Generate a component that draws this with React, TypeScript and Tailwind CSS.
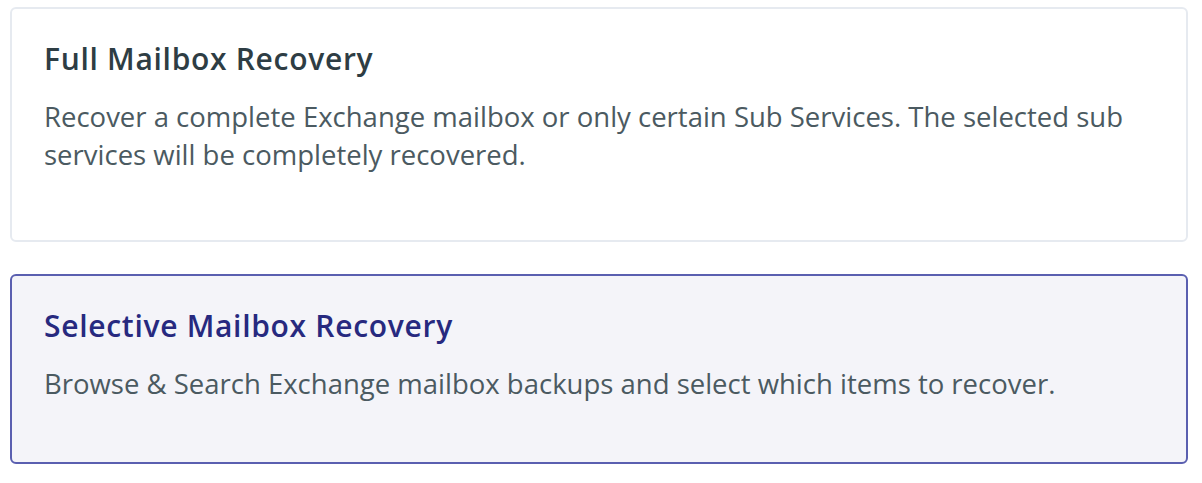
import React, { useState } from 'react';

type Option = {
  id: string;
  title: string;
  description: string;
};

const options: Option[] = [
  {
    id: 'full',
    title: 'Full Mailbox Recovery',
    description:
      'Recover a complete Exchange mailbox or only certain Sub Services. The selected sub services will be completely recovered.',
  },
  {
    id: 'selective',
    title: 'Selective Mailbox Recovery',
    description: 'Browse & Search Exchange mailbox backups and select which items to recover.',
  },
];

const App: React.FC = () => {
  const [selected, setSelected] = useState('selective');

  return (
    <div className="min-h-screen bg-white px-[10px] pt-[7px] font-['Open_Sans',sans-serif]">
      <div className="flex w-[1178px] flex-col gap-[32px]">
        {options.map(option => {
          const active = option.id === selected;
          return (
            <button
              key={option.id}
              onClick={() => setSelected(option.id)}
              className={
                active
                  ? 'rounded-[6px] border-2 border-[#5a5fb0] bg-[#f4f4f9] px-[32px] pt-[31px] pb-[59px] text-left'
                  : 'rounded-[6px] border-2 border-[#e6eaf0] bg-white px-[32px] pt-[31px] pb-[66px] text-left'
              }
            >
              <h3
                className={
                  active
                    ? "font-['Open_Sans',sans-serif] text-[30px] leading-[38px] font-semibold tracking-[0.7px] text-[#27297f]"
                    : "font-['Open_Sans',sans-serif] text-[30px] leading-[38px] font-semibold tracking-[0.7px] text-[#2e3d44]"
                }
              >
                {option.title}
              </h3>
              <p className="mt-[20px] text-[27.5px] leading-[38px] text-[#4b5a61]">
                {option.description}
              </p>
            </button>
          );
        })}
      </div>
    </div>
  );
};

export default App;
